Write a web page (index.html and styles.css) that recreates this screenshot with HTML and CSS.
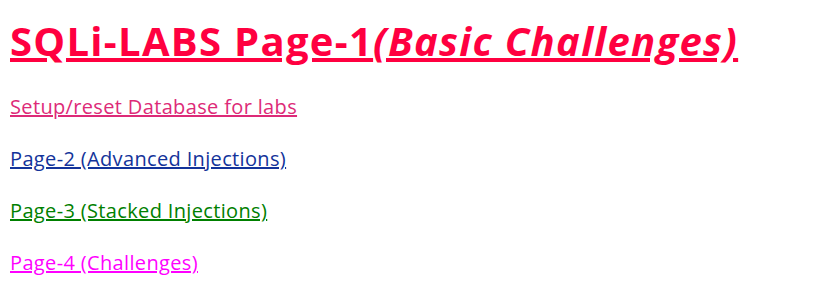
FILE: index.html
```html
<!DOCTYPE html>
<html>
<head>
<meta charset="utf-8">
<title>SQLi-LABS Page-1</title>
<link rel="stylesheet" href="styles.css">
</head>
<body>
<h1 class="title"><a href="#" class="title-link">SQLi-LABS Page-1<em class="sub">(Basic Challenges)</em></a></h1>
<nav class="links">
  <a href="#" class="link setup">Setup/reset Database for labs</a>
  <a href="#" class="link page2">Page-2 (Advanced Injections)</a>
  <a href="#" class="link page3">Page-3 (Stacked Injections)</a>
  <a href="#" class="link page4">Page-4 (Challenges)</a>
</nav>
</body>
</html>
```
FILE: styles.css
```css
html, body {
  margin: 0;
  background: #ffffff;
}
body {
  padding: 8px 10px;
  font-family: "Open Sans", "Noto Sans", sans-serif;
}
.title {
  margin: 7px 0 0 0;
  font-size: 40px;
  line-height: 52px;
  font-weight: 700;
  letter-spacing: 1.3px;
}
.title-link {
  color: #ff0040;
  text-decoration: underline;
}
.sub {
  font-style: italic;
}
.links {
  display: flex;
  flex-direction: column;
  align-items: flex-start;
  gap: 26px;
  margin-top: 27px;
}
.link {
  font-size: 20px;
  line-height: 26px;
  letter-spacing: 0.35px;
  text-decoration: underline;
}
.setup { color: #dd2a78; }
.page2 { color: #13339a; }
.page3 { color: #008000; }
.page4 { color: #ff00ff; }
```
